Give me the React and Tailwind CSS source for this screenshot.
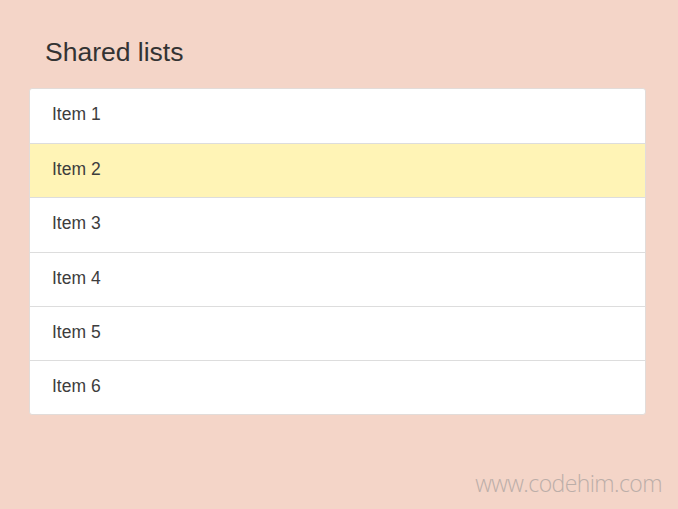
import React from 'react';

const items = ['Item 1', 'Item 2', 'Item 3', 'Item 4', 'Item 5', 'Item 6'];

const App = () => {
  return (
    <div className="min-h-[509px] bg-[#f4d5c8] px-[29px] pt-[34px] relative" style={{ fontFamily: '"Liberation Sans", Arial, sans-serif' }}>
      <h2 className="text-[26.5px] leading-[36px] text-[#333] pl-4 mb-[18px]">Shared lists</h2>
      <ul className="w-[617px] bg-white rounded-[3px] border border-[#e2dcd9] overflow-hidden">
        {items.map((item, i) => (
          <li
            key={item}
            className={`h-[54.2px] flex items-center pl-[22px] pb-[3px] text-[17.5px] text-[#3d3d3d] ${i > 0 ? 'border-t border-[#ddd]' : ''} ${i === 1 ? 'bg-[#fff4b6]' : ''}`}
          >
            {item}
          </li>
        ))}
      </ul>
      <div className="absolute right-[16px] bottom-[9px] text-[23px] text-[#bcaea8] tracking-tight" style={{ fontFamily: '"Open Sans", sans-serif', fontWeight: 300 }}>
        www.codehim.com
      </div>
    </div>
  );
};

export default App;
